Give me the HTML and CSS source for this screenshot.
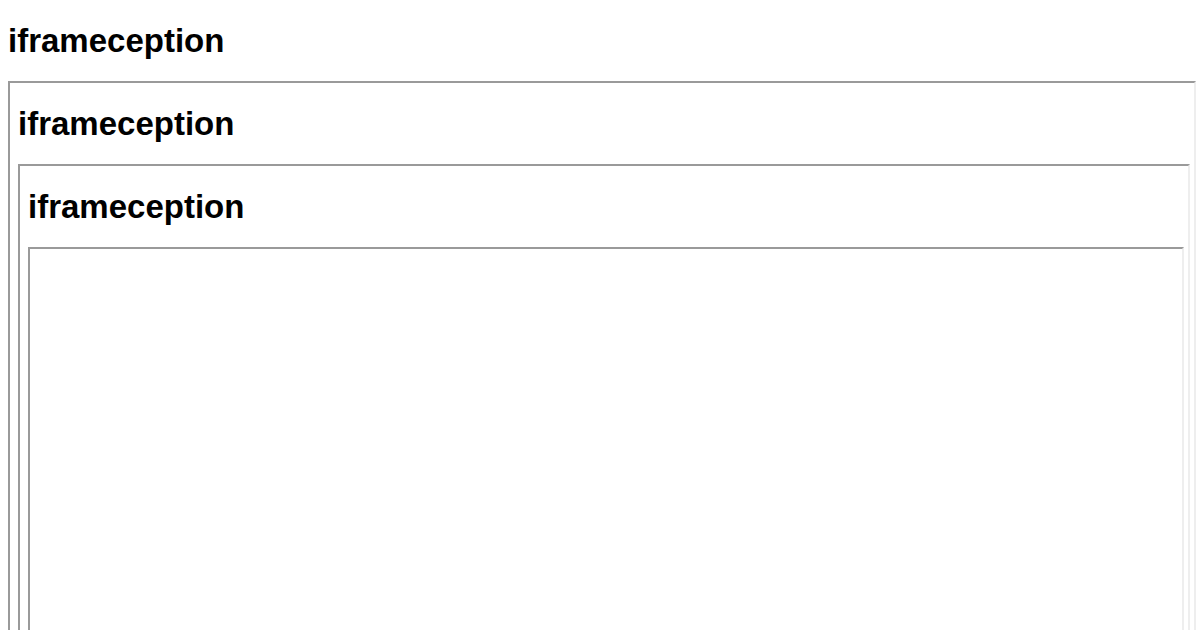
FILE: index.html
```html
<!DOCTYPE html>
<html lang="en">
<head>
    <meta charset="UTF-8">
    <meta name="viewport" content="width=device-width, initial-scale=1.0">
    <title>iframeception</title>
    <link rel="stylesheet" href="styles.css">
</head>
<body>
    <h1>iframeception</h1>
    <div class="frame">
        <h1>iframeception</h1>
        <div class="frame">
            <h1>iframeception</h1>
            <div class="frame frame-empty"></div>
        </div>
    </div>
</body>
</html>
```

FILE: styles.css
```css
html, body {
    overflow: hidden;
}

body {
    margin: 0;
    padding: 0 8px;
    font-family: "Liberation Sans", Arial, sans-serif;
    color: #000000;
    background: #ffffff;
}

h1 {
    font-size: 33px;
    line-height: 37px;
    font-weight: bold;
    margin: 22px 0 22px;
}

.frame {
    padding: 1px 8px 0;
    margin-right: -4px;
    border-style: solid;
    border-width: 2px;
    border-color: #9a9a9a #eeeeee #eeeeee #9a9a9a;
    background: #ffffff;
}

.frame h1 {
    margin-top: 21px;
}

.frame-empty {
    height: 600px;
    padding: 0;
}
```
